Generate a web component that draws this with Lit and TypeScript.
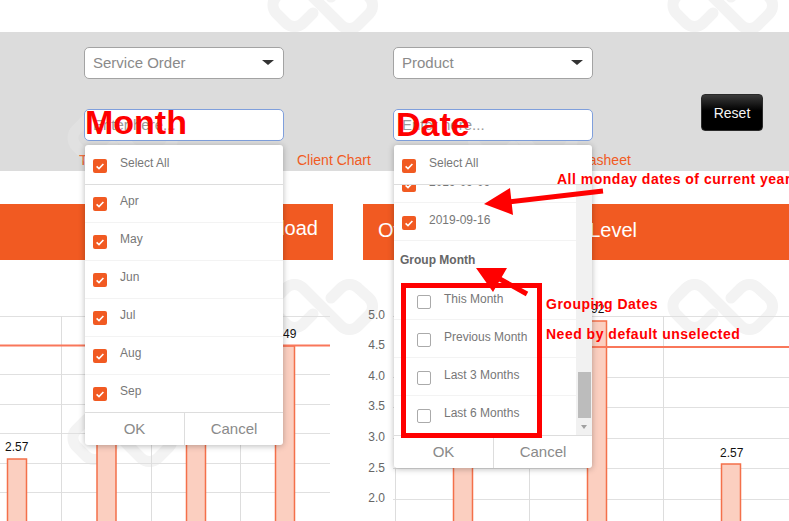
import { LitElement, html, css, svg } from "lit";
import { customElement } from "lit/decorators.js";

const tiles = [
  [265, -23, false], [665, -23, false],
  [65, 110, true], [465, 110, true],
  [265, 278, false], [665, 278, false],
  [65, 410, false], [465, 410, false],
] as const;

const months = ["Apr", "May", "Jun", "Jul", "Aug", "Sep"];
const groups = ["This Month", "Previous Month", "Last 3 Months", "Last 6 Months"];

const leftGrid = [56, 114, 144, 173, 203, 232];
const rightGrid = [56, 117, 147, 178, 208, 239];
const ticks: [string, number][] = [["5.0", 55], ["4.5", 85], ["4.0", 116], ["3.5", 146], ["3.0", 177], ["2.5", 208], ["2.0", 238]];

@customElement("chart-left")
class ChartLeft extends LitElement {
  static styles = css`
    :host { display: block; height: 261px; }
    svg { display: block; }
    text { font: 12px "Liberation Sans", Arial, sans-serif; fill: #111; }
  `;
  render() {
    return html`<svg width="333" height="261" viewBox="0 0 333 261">
      ${leftGrid.map((y) => svg`<line x1="0" x2="330" y1=${y + 0.5} y2=${y + 0.5} stroke="#e0e0e0"/>`)}
      ${[61.5, 151.5, 240.5].map((x) => svg`<line x1=${x} x2=${x} y1="56" y2="261" stroke="#ddd"/>`)}
      ${([[7.5, 199], [97, 86], [186.5, 86], [275.5, 86]] as const).map(([x, y]) => svg`<path d="M${x} 261V${y}h19V261" fill="#fbcfc0" stroke="#f4704a" stroke-width="1.5"/>`)}
      <line x1="0" x2="330" y1="85.5" y2="85.5" stroke="#f9775a" stroke-width="2"/>
      <text x="5" y="191">2.57</text>
      <text x="273" y="78">4.49</text>
    </svg>`;
  }
}

@customElement("chart-right")
class ChartRight extends LitElement {
  static styles = css`
    :host { display: block; height: 261px; }
    svg { display: block; }
    text { font: 12px "Liberation Sans", Arial, sans-serif; fill: #111; }
    .tick { fill: #666; text-anchor: end; }
  `;
  render() {
    return html`<svg width="426" height="261" viewBox="0 0 426 261">
      ${rightGrid.map((y) => svg`<line x1="30" x2="426" y1=${y + 0.5} y2=${y + 0.5} stroke="#e0e0e0"/>`)}
      ${[32.5, 166.5, 300.5].map((x) => svg`<line x1=${x} x2=${x} y1="56" y2="261" stroke="#ddd"/>`)}
      ${ticks.map(([t, y]) => svg`<text class="tick" x="22" y=${y + 4}>${t}</text>`)}
      ${([[90.5, 100], [224.5, 61], [358.5, 204]] as const).map(([x, y]) => svg`<path d="M${x} 261V${y}h19V261" fill="#fbcfc0" stroke="#f4704a" stroke-width="1.5"/>`)}
      <line x1="32" x2="426" y1="87" y2="87" stroke="#f9775a" stroke-width="2"/>
      <text x="218" y="53">4.92</text>
      <text x="357" y="197">2.57</text>
    </svg>`;
  }
}

@customElement("app-root")
export class AppRoot extends LitElement {
  static styles = css`
    :host {
      display: block; position: relative; width: 789px; height: 521px; overflow: hidden;
      background: #fff; font-family: "Liberation Sans", Arial, sans-serif;
    }
    .wm { position: absolute; width: 115px; height: 60px; fill: none; stroke: #f3f3f3; stroke-width: 11; stroke-linecap: round; }
    .wm.ongray { z-index: 1; stroke: rgba(255, 255, 255, .14); }
    .page { position: relative; padding-top: 32px; }
    .bar {
      height: 139px; box-sizing: border-box; padding: 15px 0 0 84px; background: #dcdcdc;
      display: grid; grid-template-columns: 200px 200px 62px; column-gap: 109px; row-gap: 30px;
      grid-template-rows: 32px 32px;
    }
    .select {
      box-sizing: border-box; height: 32px; background: #fff; border: 1px solid #a3a3a3; border-radius: 5px;
      display: flex; align-items: center; justify-content: space-between; padding: 0 8px 2px 8px;
      color: #8a8a8a; font-size: 15px;
    }
    .caret { width: 0; height: 0; border-left: 6px solid transparent; border-right: 6px solid transparent; border-top: 5px solid #333; margin: 0 1px 0 0; }
    .field { position: relative; z-index: 2; }
    .input {
      box-sizing: border-box; height: 32px; background: #fff; border: 1px solid #7f9fdc; border-radius: 5px;
      display: flex; align-items: center; padding: 0 8px 2px; color: #9a9a9a; font-size: 15px;
    }
    .reset {
      grid-column: 3; grid-row: 1 / span 2; align-self: end; margin: 0 0 10px -1px; height: 37px; width: 62px; box-sizing: border-box;
      border: 1px solid #2a2a2a; border-radius: 4px; background: linear-gradient(#3a3a3a, #000 45%, #000);
      color: #f4f4f4; font: 14px "Liberation Sans", Arial, sans-serif; padding: 0;
    }
    .tabs {
      position: absolute; left: 79px; top: 152px; display: grid; grid-template-columns: 218px 270px auto;
      color: #f15a22; font-size: 14px; line-height: 16px;
    }
    .panel {
      position: absolute; left: 1px; top: 36px; width: 198px; background: #fff; border-radius: 3px; z-index: 2;
      box-shadow: 0 1px 6px rgba(0, 0, 0, .28); display: flex; flex-direction: column;
    }
    .row {
      display: flex; align-items: center; gap: 13px; padding: 2px 0 0 8px; height: 38px; box-sizing: border-box;
      border-bottom: 1px solid #f3f3f3; color: #777; font-size: 12px;
    }
    .row.all { height: 40px; border-bottom: 1px solid #ddd; }
    .row.month { padding-top: 0; }
    .row.last { border-bottom: 0; height: 37px; }
    .row.sub { padding-left: 23px; }
    .row span { margin-top: -6px; }
    .box { width: 14px; height: 14px; flex: none; box-sizing: border-box; border-radius: 2px; background: #f15a22; display: flex; align-items: center; justify-content: center; }
    .box svg { display: block; }
    .box.off { background: #fff; border: 1px solid #aaa; }
    .foot { height: 33px; border-top: 1px solid #ddd; box-sizing: border-box; display: grid; grid-template-columns: 1fr 1fr; color: #8a8a8a; font-size: 15px; }
    .foot div { display: flex; align-items: center; justify-content: center; padding-bottom: 1px; }
    .foot div + div { border-left: 1px solid #ddd; }
    .scrollwrap { display: flex; height: 250px; overflow: hidden; }
    .list { flex: 1; min-width: 0; margin-top: -20px; }
    .listhead { height: 41px; box-sizing: border-box; padding: 12px 0 0 6px; font-size: 12px; line-height: 14px; font-weight: bold; color: #666; }
    .track { width: 16px; flex: none; background: #f1f1f1; display: flex; flex-direction: column; align-items: center; justify-content: flex-end; padding-bottom: 6px; box-sizing: border-box; }
    .thumb { width: 13px; height: 46px; background: #bcbcbc; margin-bottom: 7px; }
    .down { width: 0; height: 0; border-left: 3.5px solid transparent; border-right: 3.5px solid transparent; border-top: 4px solid #a0a0a0; }
    .charts { display: grid; grid-template-columns: 333px 426px; column-gap: 30px; margin-top: 33px; }
    .head { background: #f15a22; height: 56px; color: #fff; font-size: 20px; display: flex; align-items: center; white-space: nowrap; overflow: hidden; box-sizing: border-box; }
    .head.l { justify-content: flex-end; padding: 0 15px 8px 0; }
    .head.r { padding: 0 0 3px 15px; word-spacing: -1.5px; }
    .mark { position: absolute; z-index: 3; color: #f00; font-weight: bold; white-space: nowrap; line-height: 1; }
    .big { font-size: 34px; }
    .month { left: 85px; top: 105px; }
    .date { left: 396px; top: 107px; }
    .note { font-size: 14px; letter-spacing: .5px; }
    .n1 { left: 557px; top: 172px; }
    .n2 { left: 546px; top: 297px; }
    .n3 { left: 546px; top: 327px; }
    .frame { position: absolute; z-index: 3; left: 401px; top: 283px; width: 141px; height: 155px; border: 5px solid #f00; box-sizing: border-box; }
    .arrows { position: absolute; z-index: 4; left: 0; top: 0; pointer-events: none; }
  `;

  check() {
    return html`<div class="box"><svg width="10" height="10" viewBox="0 0 10 10"><path d="M1.6 5.4 4 7.6 8.4 3" fill="none" stroke="#fff" stroke-width="1.6"/></svg></div>`;
  }

  row(label: string, on = true, cls = "") {
    return html`<div class="row ${cls}">${on ? this.check() : html`<div class="box off"></div>`}<span>${label}</span></div>`;
  }

  render() {
    return html`
      ${tiles.map(([x, y, g]) => svg`<svg class="wm ${g ? "ongray" : ""}" style="left:${x}px;top:${y}px" viewBox="0 0 115 60">
        <path d="M48 36 38 46A12 12 0 0 1 21 46L11 36A12 12 0 0 1 11 20L21 10A12 12 0 0 1 38 10L76 48A12 12 0 0 0 93 48L104 37A12 12 0 0 0 104 20L93 10A12 12 0 0 0 76 10L66 20"/>
      </svg>`)}
      <div class="page">
        <div class="bar">
          <div class="select">Service Order<i class="caret"></i></div>
          <div class="select">Product<i class="caret"></i></div>
          <button class="reset">Reset</button>
          <div class="field">
            <div class="input">Enter here...</div>
            <div class="panel">
              ${this.row("Select All", true, "all")}
              ${months.map((m, i) => this.row(m, true, i === 5 ? "month last" : "month"))}
              <div class="foot"><div>OK</div><div>Cancel</div></div>
            </div>
          </div>
          <div class="field">
            <div class="input">Enter here...</div>
            <div class="panel">
              ${this.row("Select All", true, "all")}
              <div class="scrollwrap">
                <div class="list">
                  ${this.row("2019-09-09")}
                  ${this.row("2019-09-16")}
                  <div class="listhead">Group Month</div>
                  ${groups.map((g, i) => this.row(g, false, i === 3 ? "sub last" : "sub"))}
                </div>
                <div class="track"><div class="thumb"></div><div class="down"></div></div>
              </div>
              <div class="foot"><div>OK</div><div>Cancel</div></div>
            </div>
          </div>
        </div>
        <div class="tabs"><div>Technician Chart</div><div>Client Chart</div><div>Datasheet</div></div>
        <div class="charts">
          <div>
            <div class="head l">Overall Workload</div>
            <chart-left></chart-left>
          </div>
          <div>
            <div class="head r">Overall Product Service Level</div>
            <chart-right></chart-right>
          </div>
        </div>
      </div>
      <div class="mark big month">Month</div>
      <div class="mark big date">Date</div>
      <div class="mark note n1">All monday dates of current year</div>
      <div class="mark note n2">Grouping Dates</div>
      <div class="mark note n3">Need by default unselected</div>
      <div class="frame"></div>
      <svg class="arrows" width="789" height="521" viewBox="0 0 789 521">
        <path d="M484 204 510 188 513 215Z M476 268H507L493 292Z" fill="#f00"/>
        <path d="M603 191 508 202M527 294 498 278" stroke="#f00" stroke-width="5" fill="none"/>
      </svg>
    `;
  }
}
void ChartLeft; void ChartRight;
